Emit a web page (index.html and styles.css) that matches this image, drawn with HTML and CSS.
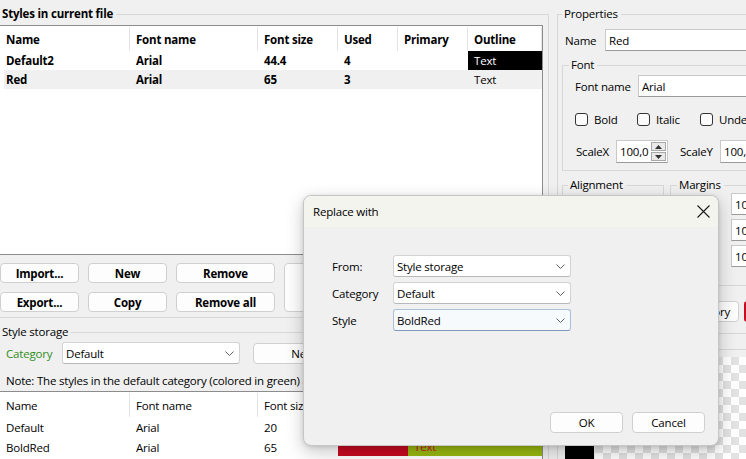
FILE: index.html
```html
<!DOCTYPE html>
<html>
<head>
<meta charset="utf-8">
<title>Styles Manager</title>
<link rel="stylesheet" href="styles.css">
</head>
<body>
<div class="app">
  <div class="left">
    <section class="group g-current">
      <div class="gtitle b">Styles in current file</div>
      <div class="list list-top">
        <div class="lrow lhead b">
          <span class="c c1">Name</span><span class="c c2">Font name</span><span class="c c3">Font size</span><span class="c c4">Used</span><span class="c c5">Primary</span><span class="c c6">Outline</span>
        </div>
        <div class="lrow b">
          <span class="c c1">Default2</span><span class="c c2">Arial</span><span class="c c3">44.4</span><span class="c c4">4</span><span class="c c5"></span><span class="c c6 n out-black">Text</span>
        </div>
        <div class="lrow b sel">
          <span class="c c1">Red</span><span class="c c2">Arial</span><span class="c c3">65</span><span class="c c4">3</span><span class="c c5"></span><span class="c c6 n">Text</span>
        </div>
      </div>
      <div class="btns">
        <div class="btn b">Import...</div>
        <div class="btn b">New</div>
        <div class="btn b">Remove</div>
        <div class="btn b tall"><span class="tall-text">Copy to<br>storage</span></div>
        <div class="btn b">Export...</div>
        <div class="btn b">Copy</div>
        <div class="btn b">Remove all</div>
      </div>
    </section>

    <section class="group g-storage">
      <div class="gtitle">Style storage</div>
      <div class="catrow">
        <span class="catlabel">Category</span>
        <div class="combo catcombo"><span>Default</span><svg class="chev" width="9" height="5" viewBox="0 0 9 5"><polyline points="0.5,0.5 4.5,4.5 8.5,0.5" fill="none" stroke="#606060" stroke-width="1"/></svg></div>
        <div class="btn newbtn">New</div>
      </div>
      <div class="note">Note: The styles in the default category (colored in green) are used as defaults</div>
      <div class="list list-bottom">
        <div class="lrow lhead">
          <span class="c c1">Name</span><span class="c c2">Font name</span><span class="c c3">Font size</span><span class="c d4">Primary</span><span class="c d5">Outline</span>
        </div>
        <div class="lrow r20">
          <span class="c c1">Default</span><span class="c c2">Arial</span><span class="c c3">20</span><span class="c d4"></span><span class="c d5"></span>
        </div>
        <div class="lrow r20">
          <span class="c c1">BoldRed</span><span class="c c2">Arial</span><span class="c c3">65</span><span class="c d4 bar-red"></span><span class="c d5 bar-green">Text</span>
        </div>
      </div>
    </section>
  </div>

  <div class="right">
    <section class="group g-props">
      <div class="gtitle pt">Properties</div>
      <div class="namerow">
        <span class="lab namelab">Name</span>
        <div class="input nameinput">Red</div>
      </div>
      <section class="group g-font">
        <div class="gtitle ft">Font</div>
        <div class="fnrow">
          <span class="lab fnlab">Font name</span>
          <div class="input fninput">Arial</div>
        </div>
        <div class="chkrow">
          <label class="chk w1"><span class="box"></span>Bold</label>
          <label class="chk w2"><span class="box"></span>Italic</label>
          <label class="chk"><span class="box"></span>Underline</label>
        </div>
        <div class="scalerow">
          <span class="lab sxlab">ScaleX</span>
          <div class="input spin"><span>100,0</span>
            <div class="spinbtns">
              <span class="sb"><svg width="7" height="4" viewBox="0 0 7 4"><polygon points="0,4 3.5,0 7,4" fill="#333"/></svg></span>
              <span class="sb"><svg width="7" height="4" viewBox="0 0 7 4"><polygon points="0,0 3.5,4 7,0" fill="#333"/></svg></span>
            </div>
          </div>
          <span class="lab sylab">ScaleY</span>
          <div class="input spin"><span>100,0</span></div>
        </div>
      </section>
      <div class="amrow">
        <section class="group g-align">
          <div class="gtitle at">Alignment</div>
        </section>
        <section class="group g-marg">
          <div class="gtitle mt">Margins</div>
          <div class="mrow"><span class="mlab">Left</span><div class="input minput">10</div></div>
          <div class="mrow"><span class="mlab">Right</span><div class="input minput">10</div></div>
          <div class="mrow"><span class="mlab">Vertical</span><div class="input minput">10</div></div>
        </section>
      </div>
      <div class="savrow">
        <div class="btn savbtn">Save to category</div>
        <div class="colorbox"></div>
      </div>
    </section>
    <section class="group g-preview">
      <div class="gtitle pvt">Preview</div>
      <div class="pvbody">
        <div class="pvblack"></div>
        <div class="checker"></div>
      </div>
    </section>
  </div>
</div>

<div class="dialog">
  <div class="dtitle">
    <span>Replace with</span>
    <svg class="close" width="13" height="13" viewBox="0 0 13 13"><path d="M0.5 0.5 L12.5 12.5 M12.5 0.5 L0.5 12.5" stroke="#1b1b1b" stroke-width="1.1" fill="none"/></svg>
  </div>
  <div class="dbody">
    <div class="frow"><span class="flab">From:</span><div class="combo dcombo"><span>Style storage</span><svg class="chev" width="9" height="5" viewBox="0 0 9 5"><polyline points="0.5,0.5 4.5,4.5 8.5,0.5" fill="none" stroke="#606060" stroke-width="1"/></svg></div></div>
    <div class="frow"><span class="flab">Category</span><div class="combo dcombo"><span>Default</span><svg class="chev" width="9" height="5" viewBox="0 0 9 5"><polyline points="0.5,0.5 4.5,4.5 8.5,0.5" fill="none" stroke="#606060" stroke-width="1"/></svg></div></div>
    <div class="frow"><span class="flab">Style</span><div class="combo dcombo focus"><span>BoldRed</span><svg class="chev" width="9" height="5" viewBox="0 0 9 5"><polyline points="0.5,0.5 4.5,4.5 8.5,0.5" fill="none" stroke="#606060" stroke-width="1"/></svg></div></div>
    <div class="dbtns">
      <div class="btn dbtn">OK</div>
      <div class="btn dbtn">Cancel</div>
    </div>
  </div>
</div>
</body>
</html>
```

FILE: styles.css
```css
* { box-sizing: border-box; }
html, body { margin: 0; padding: 0; }
body {
  width: 746px;
  height: 459px;
  overflow: hidden;
  position: relative;
  background: #f0f0f0;
  font-family: "Open Sans", "Noto Sans", sans-serif;
  font-size: 11.5px;
  letter-spacing: -0.2px;
  color: #000;
}
.b { font-weight: 700; }
.n { font-weight: 400; }

.app {
  display: grid;
  grid-template-columns: 552px 194px;
  height: 459px;
  overflow: hidden;
}

/* group boxes */
.group {
  border: 1px solid #d8d8d8;
  display: flex;
  flex-direction: column;
  align-items: flex-start;
}
.gtitle {
  height: 16px;
  line-height: 16px;
  margin-top: -9px;
  padding: 0 3px 0 2px;
  background: #f0f0f0;
  white-space: nowrap;
}

/* ---------- left ---------- */
.left { display: flex; flex-direction: column; min-width: 0; }
.g-current {
  margin-top: 14px;
  width: 549px;
  border-left: none;
  padding-bottom: 5px;
}
.list {
  background: #fff;
  border-top: 1px solid #8c8c8c;
  border-right: 1px solid #8c8c8c;
  width: 543px;
}
.list-top {
  margin-top: 3px;
  height: 230px;
  border-bottom: 1px solid #8c8c8c;
}
.lrow { display: flex; height: 19px; align-items: stretch; }
.lrow.r20 { height: 20px; }
.lhead { height: 25px; }
.lrow.sel { background: linear-gradient(to right, #fff 4px, #f0f0f0 4px); }
.c {
  padding-left: 6px;
  white-space: nowrap;
  overflow: hidden;
  display: flex;
  align-items: center;
}
.lhead .c { border-right: 1px solid #e5e5e5; margin-top: 1px; }
.c1 { width: 130px; }
.c2 { width: 128px; }
.c3 { width: 80px; }
.c4 { width: 60px; }
.c5 { width: 70px; }
.c6 { width: 74px; }
.d4 { width: 70px; }
.d5 { width: 134px; }
.out-black { background: #000; color: #fff; }
.bar-red { background: #c80a22; margin-bottom: 1px; }
.bar-green { background: #98b90f; color: #d4102a; margin-bottom: 1px; }

.btns {
  margin-top: 8px;
  display: grid;
  grid-template-columns: 79px 79px 99px 99px;
  grid-template-rows: 20px 20px;
  gap: 9px;
}
.btn {
  background: #fdfdfd;
  border: 1px solid #d0d0d0;
  border-radius: 4px;
  display: flex;
  align-items: center;
  justify-content: center;
  white-space: nowrap;
  overflow: hidden;
}
.btn.tall { grid-row: 1 / 3; grid-column: 4; }
.tall-text { text-align: center; line-height: 15px; }

.g-storage {
  margin-top: 14px;
  width: 549px;
  border-left: none;
  border-bottom: none;
  flex: 1;
}
.catrow {
  margin-top: 2px;
  display: flex;
  align-items: center;
  height: 22px;
}
.catlabel { width: 62px; padding-left: 6px; color: #2f8f1a; }
.combo {
  position: relative;
  height: 22px;
  background: #fff;
  border: 1px solid #d3d3d3;
  border-bottom-color: #b8b8b8;
  border-radius: 3px;
  display: flex;
  align-items: center;
  justify-content: space-between;
  padding: 0 5px 0 3px;
}
.catcombo { width: 178px; }
.newbtn { margin-left: 13px; width: 100px; height: 21px; }
.note {
  margin-top: 9px;
  height: 16px;
  line-height: 16px;
  padding-left: 6px;
  white-space: nowrap;
}
.list-bottom {
  margin-top: 2px;
  flex: 1;
  align-self: stretch;
  width: 543px;
  flex-grow: 1;
}

/* ---------- right ---------- */
.right {
  padding-left: 5px;
  overflow: hidden;
  display: flex;
  flex-direction: column;
}
.g-props {
  margin-top: 14px;
  width: 260px;
  border-right: none;
  border-bottom-color: #d8d8d8;
  padding-bottom: 11px;
}
.pt { margin-left: 4px; }
.lab { white-space: nowrap; }
.input {
  height: 22px;
  background: #fff;
  border: 1px solid #c9c9c9;
  border-bottom-color: #9a9a9a;
  display: flex;
  align-items: center;
  padding-left: 3px;
  white-space: nowrap;
  overflow: hidden;
}
.namerow { margin-top: 7px; display: flex; align-items: center; }
.namelab { width: 47px; padding-left: 7px; }
.nameinput { width: 200px; }

.g-font {
  margin-top: 14px;
  margin-left: 4px;
  width: 240px;
  border-right: none;
  padding-bottom: 7px;
}
.ft { margin-left: 6px; }
.fnrow { margin-top: 2px; display: flex; align-items: center; }
.fnlab { width: 75px; padding-left: 12px; }
.fninput { width: 150px; }
.chkrow {
  margin-top: 14px;
  height: 16px;
  display: flex;
  align-items: center;
  padding-left: 12px;
}
.chk { display: flex; align-items: center; gap: 6px; white-space: nowrap; }
.chk.w1 { width: 62px; }
.chk.w2 { width: 63px; }
.box {
  width: 13px;
  height: 13px;
  border: 1px solid #333;
  border-radius: 3px;
  background: #fbfbfb;
}
.scalerow { margin-top: 13px; display: flex; align-items: center; }
.sxlab { width: 53px; padding-left: 13px; }
.spin {
  width: 52px;
  height: 23px;
  justify-content: space-between;
  padding-right: 1px;
}
.spinbtns { display: flex; flex-direction: column; gap: 1px; }
.sb {
  width: 15px;
  height: 9px;
  background: #e9e9e9;
  border: 1px solid #a8a8a8;
  display: flex;
  align-items: center;
  justify-content: center;
}
.sylab { margin-left: 12px; width: 40px; }

.amrow { margin-top: 14px; display: flex; gap: 6px; margin-left: 4px; }
.g-align { width: 102px; height: 100px; }
.at { margin-left: 5px; }
.g-marg { width: 120px; border-right: none; padding-bottom: 18px; }
.mt { margin-left: 6px; }
.mrow { display: flex; align-items: center; margin-bottom: 4px; }
.mrow:first-of-type { margin-top: -1px; }
.mlab { width: 60px; padding-left: 8px; }
.minput { width: 40px; height: 22px; }
.mrow:last-child { margin-bottom: 0; }

.savrow { margin-top: 15px; display: flex; align-items: center; gap: 5px; margin-left: 90px; }
.savbtn { width: 91px; height: 21px; justify-content: flex-end; padding-right: 8px; }
.colorbox { width: 20px; height: 21px; border: 1px solid #c8c8c8; border-left: 3px solid #c80a22; background: #fff; border-radius: 3px 0 0 3px; }

.g-preview {
  margin-top: 15px;
  width: 260px;
  border-right: none;
  border-bottom: none;
  flex: 1;
}
.pvt { margin-left: 4px; }
.pvbody { display: flex; gap: 1px; flex: 1; align-self: stretch; padding-left: 7px; }
.pvblack { width: 29px; background: #000; }
.checker {
  flex: 1;
  background-color: #ffffff;
  background-image: conic-gradient(#e2e2e2 25%, #ffffff 0 50%, #e2e2e2 0 75%, #ffffff 0);
  background-size: 16px 16px;
}

/* ---------- dialog ---------- */
.dialog {
  position: absolute;
  left: 303px;
  top: 195px;
  width: 416px;
  height: 251px;
  background: #f0f0f0;
  border: 1px solid #c6c6c6;
  border-radius: 8px;
  box-shadow: 0 6px 18px rgba(0,0,0,0.22), 0 1px 4px rgba(0,0,0,0.12);
  overflow: hidden;
  display: flex;
  flex-direction: column;
}
.dtitle {
  height: 31px;
  background: #f4f4ee;
  display: flex;
  align-items: center;
  justify-content: space-between;
  padding: 0 8px 0 9px;
}
.close { display: block; }
.dbody {
  flex: 1;
  display: flex;
  flex-direction: column;
  padding: 28px 13px 12px 28px;
  gap: 5px;
}
.frow { display: flex; align-items: center; }
.flab { width: 61px; }
.dcombo { width: 178px; }
.dcombo.focus { background: #f7fafd; border-color: #a9bfd6; border-bottom-color: #7f9ab8; }
.dbtns {
  margin-top: auto;
  display: flex;
  justify-content: flex-end;
  gap: 9px;
  align-self: stretch;
}
.dbtn { width: 73px; height: 21px; }
```
